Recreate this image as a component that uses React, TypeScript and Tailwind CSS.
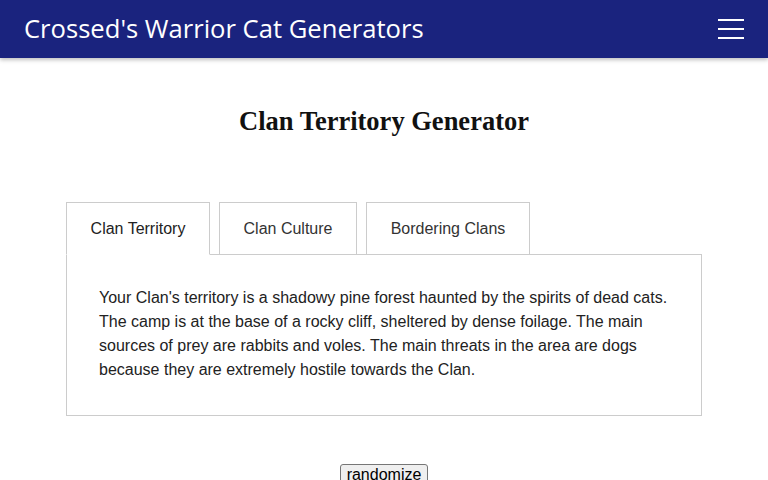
import { useState } from 'react';

const tabs = [
  { label: 'Clan Territory', w: 'w-[144px]' },
  { label: 'Clan Culture', w: 'w-[138px]' },
  { label: 'Bordering Clans', w: 'w-[164px]' },
];

export default function App() {
  const [active, setActive] = useState(0);

  return (
    <div className="min-h-screen bg-white font-['Liberation_Sans',Arial,sans-serif] text-[#222]">
      <header className="h-[58px] bg-[#1a237e] shadow-[0_2px_4px_rgba(0,0,0,0.25)] flex items-center justify-between pl-6 pr-6">
        <h1 className="font-['Open_Sans',sans-serif] text-[25.6px] text-white leading-none">
          Crossed's Warrior Cat Generators
        </h1>
        <button className="flex flex-col gap-[7px] w-[26px]" aria-label="menu">
          <span className="block h-[2px] w-[26px] bg-white" />
          <span className="block h-[2px] w-[26px] bg-white" />
          <span className="block h-[2px] w-[26px] bg-white" />
        </button>
      </header>

      <main className="flex flex-col items-center">
        <h2 className="mt-[46px] font-['Liberation_Serif',serif] text-[26.5px] leading-[34px] font-bold text-[#111]">
          Clan Territory Generator
        </h2>

        <section className="mt-[64px] w-[636px]">
          {/* Tabs */}
          <div className="flex gap-[9px] mb-[-1px] relative z-10">
            {tabs.map((t, i) => (
              <button
                key={t.label}
                onClick={() => setActive(i)}
                className={`${t.w} h-[53px] border border-[#ccc] text-[16px] bg-white ${
                  i === active ? 'border-b-white' : 'text-[#333]'
                }`}
              >
                {t.label}
              </button>
            ))}
          </div>

          {/* Panel */}
          <div className="border border-[#ccc] px-8 pt-[31px] pb-[33px] text-[16px] leading-6">
            <p>
              Your Clan's territory is a shadowy pine forest haunted by the spirits of dead cats. The camp is at the
              base of a rocky cliff, sheltered by dense foilage. The main sources of prey are rabbits and voles. The
              main threats in the area are dogs because they are extremely hostile towards the Clan.
            </p>
          </div>
        </section>

        <button className="mt-[48px] px-[6px] border border-[#767676] rounded-[3px] bg-[#efefef] text-[16px] leading-[20px] text-black">
          randomize
        </button>
      </main>
    </div>
  );
}
